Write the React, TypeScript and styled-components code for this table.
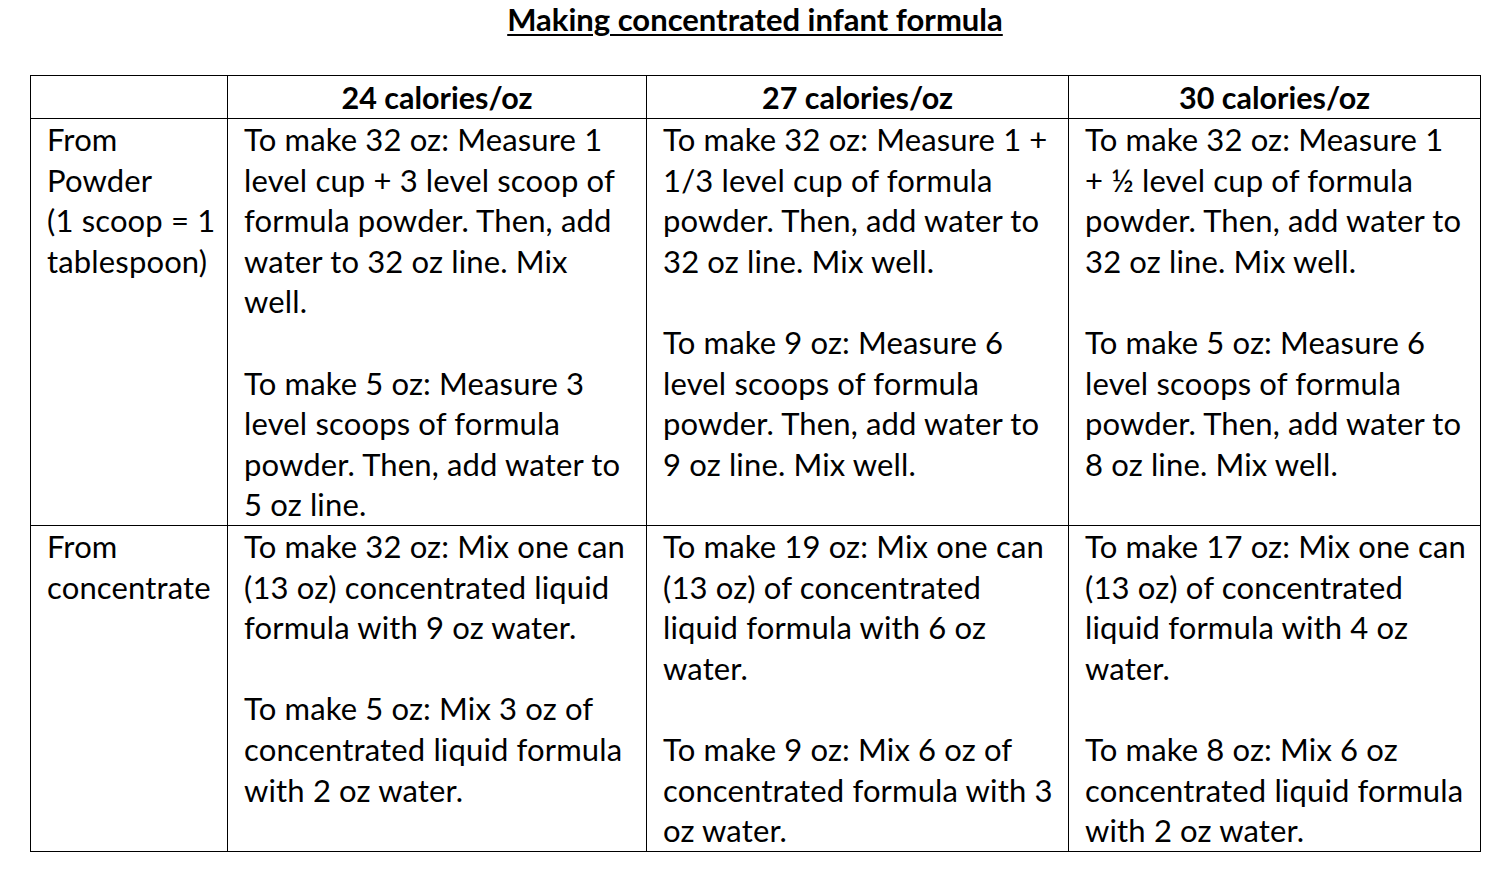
import React from 'react'
import styled, { createGlobalStyle } from 'styled-components'

const GlobalStyle = createGlobalStyle`
  html, body {
    margin: 0;
    padding: 0;
    background: #ffffff;
  }
  body {
    font-family: Lato, "Open Sans", "Liberation Sans", sans-serif;
    color: #000000;
  }
`

const Page = styled.div`
  width: 1450px;
  margin-left: 30px;
`

const Title = styled.h1`
  margin: 0;
  height: 75px;
  padding-top: 0;
  box-sizing: border-box;
  text-align: center;
  font-size: 31px;
  font-weight: 700;
  line-height: 38px;
  text-decoration: underline;
  text-underline-offset: 3px;
  text-decoration-thickness: 2px;
`

const Table = styled.table`
  width: 1450px;
  border-collapse: collapse;
  table-layout: fixed;
`

const HeadCell = styled.th`
  border: 1px solid #000;
  height: 42px;
  padding: 0;
  font-size: 30.5px;
  font-weight: 700;
  text-align: center;
  vertical-align: middle;
`

const Cell = styled.td`
  border: 1px solid #000;
  padding: 0 0 0 16px;
  vertical-align: top;
  font-size: 31px;
  letter-spacing: 0.15px;
`

const Line = styled.span`
  display: block;
  height: 40.6px;
  line-height: 40.6px;
  white-space: nowrap;
`

type Block = string[]

const widths = [197, 419, 422, 412]
const heads = ['', '24 calories/oz', '27 calories/oz', '30 calories/oz']

const rows: Block[][] = [
  [
    ['From', 'Powder', '(1 scoop = 1', 'tablespoon)'],
    [
      'To make 32 oz: Measure 1',
      'level cup + 3 level scoop of',
      'formula powder. Then, add',
      'water to 32 oz line. Mix',
      'well.',
      '',
      'To make 5 oz: Measure 3',
      'level scoops of formula',
      'powder. Then, add water to',
      '5 oz line.',
    ],
    [
      'To make 32 oz: Measure 1 +',
      '1/3 level cup of formula',
      'powder. Then, add water to',
      '32 oz line. Mix well.',
      '',
      'To make 9 oz: Measure 6',
      'level scoops of formula',
      'powder. Then, add water to',
      '9 oz line. Mix well.',
    ],
    [
      'To make 32 oz: Measure 1',
      '+ ½ level cup of formula',
      'powder. Then, add water to',
      '32 oz line. Mix well.',
      '',
      'To make 5 oz: Measure 6',
      'level scoops of formula',
      'powder. Then, add water to',
      '8 oz line. Mix well.',
    ],
  ],
  [
    ['From', 'concentrate'],
    [
      'To make 32 oz: Mix one can',
      '(13 oz) concentrated liquid',
      'formula with 9 oz water.',
      '',
      'To make 5 oz: Mix 3 oz of',
      'concentrated liquid formula',
      'with 2 oz water.',
    ],
    [
      'To make 19 oz: Mix one can',
      '(13 oz) of concentrated',
      'liquid formula with 6 oz',
      'water.',
      '',
      'To make 9 oz: Mix 6 oz of',
      'concentrated formula with 3',
      'oz water.',
    ],
    [
      'To make 17 oz: Mix one can',
      '(13 oz) of concentrated',
      'liquid formula with 4 oz',
      'water.',
      '',
      'To make 8 oz: Mix 6 oz',
      'concentrated liquid formula',
      'with 2 oz water.',
    ],
  ],
]

export default function App() {
  return (
    <>
      <GlobalStyle />
      <Page>
        <Title>Making concentrated infant formula</Title>
        <Table>
          <colgroup>
            {widths.map((w, i) => (
              <col key={i} style={{ width: w }} />
            ))}
          </colgroup>
          <thead>
            <tr>
              {heads.map((h, i) => (
                <HeadCell key={i}>{h}</HeadCell>
              ))}
            </tr>
          </thead>
          <tbody>
            {rows.map((row, r) => (
              <tr key={r}>
                {row.map((lines, c) => (
                  <Cell key={c}>
                    {lines.map((l, i) => (
                      <Line key={i}>{l || '\u00a0'}</Line>
                    ))}
                  </Cell>
                ))}
              </tr>
            ))}
          </tbody>
        </Table>
      </Page>
    </>
  )
}
